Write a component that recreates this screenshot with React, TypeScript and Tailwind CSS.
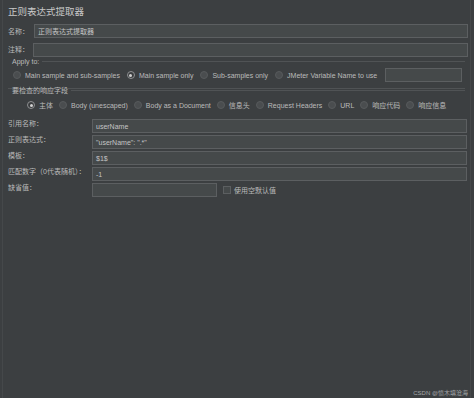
import type { ReactNode } from 'react';

const font = "font-['Liberation_Sans','Noto_Sans_CJK_SC',sans-serif]";

function Radio({ checked }: { checked?: boolean }) {
  if (checked) {
    return (
      <span className="flex h-[8px] w-[8px] shrink-0 items-center justify-center rounded-full border border-[#8e9092] bg-[#3a3c3e]">
        <span className="h-[3px] w-[3px] rounded-full bg-[#d2d2d2]" />
      </span>
    );
  }
  return <span className="h-[8px] w-[8px] shrink-0 rounded-full border border-[#575a5c] bg-[#4a4d4f]" />;
}

function Option({ label, checked }: { label: string; checked?: boolean }) {
  return (
    <span className="flex items-center gap-[4px] whitespace-nowrap">
      <Radio checked={checked} />
      <span>{label}</span>
    </span>
  );
}

function Field({ value, className }: { value?: string; className?: string }) {
  return (
    <div
      className={`flex h-[14px] items-center border border-[#5c5f61] bg-[#45494a] pl-[3px] text-[7px] leading-none text-[#c4c4c4] ${className ?? ''}`}
    >
      {value}
    </div>
  );
}

function Legend({ children }: { children: ReactNode }) {
  return (
    <div className="flex h-[8px] items-center pl-[9px] pr-[5px]">
      <span className="whitespace-nowrap text-[7px] leading-none">{children}</span>
      <span className="ml-[3px] h-px flex-1 bg-[#505355]" />
    </div>
  );
}

const rows: { label: string; value: string }[] = [
  { label: '引用名称：', value: 'userName' },
  { label: '正则表达式：', value: '"userName": ".*"' },
  { label: '模板：', value: '$1$' },
  { label: '匹配数字（0代表随机）：', value: '-1' },
];

export default function App() {
  return (
    <div className={`relative h-[398px] w-[474px] overflow-hidden bg-[#3c3f41] text-[#bbbbbb] ${font}`}>
      <div className="ml-[2px] mr-[3px] flex h-full flex-col border-x border-[#45484a]">
        <div className="flex h-[24px] items-center pl-[5px] text-[9.5px] leading-none text-[#c9c9c9]">
          正则表达式提取器
        </div>

        <div className="flex h-[14px] items-center pr-[2px]">
          <span className="w-[31px] pl-[5px] text-[7px] leading-none">名称：</span>
          <Field value="正则表达式提取器" className="flex-1" />
        </div>
        <div className="mt-[5px] flex h-[14px] items-center pr-[2px]">
          <span className="w-[30px] pb-[1px] pl-[5px] text-[7px] leading-none">注释：</span>
          <Field className="flex-1" />
        </div>

        <div className="flex flex-col">
          <Legend>Apply to:</Legend>
          <div className="flex h-[20px] items-center gap-[7px] pl-[10px] text-[7px] leading-none">
            <Option label="Main sample and sub-samples" />
            <Option label="Main sample only" checked />
            <Option label="Sub-samples only" />
            <Option label="JMeter Variable Name to use" />
            <Field className="ml-[1px] w-[77px]" />
          </div>
          <div className="mx-[5px] mt-[3px] h-px bg-[#505355]" />
        </div>

        <div className="mt-[-3px]">
          <Legend>要检查的响应字段</Legend>
        </div>
        <div className="flex h-[22px] items-center gap-[6px] pl-[24px] text-[7px] leading-none">
          <Option label="主体" checked />
          <Option label="Body (unescaped)" />
          <Option label="Body as a Document" />
          <Option label="信息头" />
          <Option label="Request Headers" />
          <Option label="URL" />
          <Option label="响应代码" />
          <Option label="响应信息" />
        </div>

        <div className="mt-[3px] flex flex-col gap-[2px] pr-[3px]">
          {rows.map((r) => (
            <div key={r.label} className="flex h-[14px] items-center">
              <span className="w-[89px] whitespace-nowrap pb-[5px] pl-[5px] text-[7px] leading-none">{r.label}</span>
              <Field value={r.value} className="flex-1" />
            </div>
          ))}
          <div className="flex h-[14px] items-center">
            <span className="w-[89px] pb-[5px] pl-[5px] text-[7px] leading-none">缺省值：</span>
            <Field className="w-[125px]" />
            <span className="ml-[6px] h-[8px] w-[8px] border border-[#5c5f61] bg-[#45494a]" />
            <span className="ml-[3px] text-[7px] leading-none">使用空默认值</span>
          </div>
        </div>
      </div>

      <div className="absolute right-[6px] top-[390px] text-[6px] leading-none text-[#a5a7a9]">CSDN @愤木填沧海</div>
    </div>
  );
}
